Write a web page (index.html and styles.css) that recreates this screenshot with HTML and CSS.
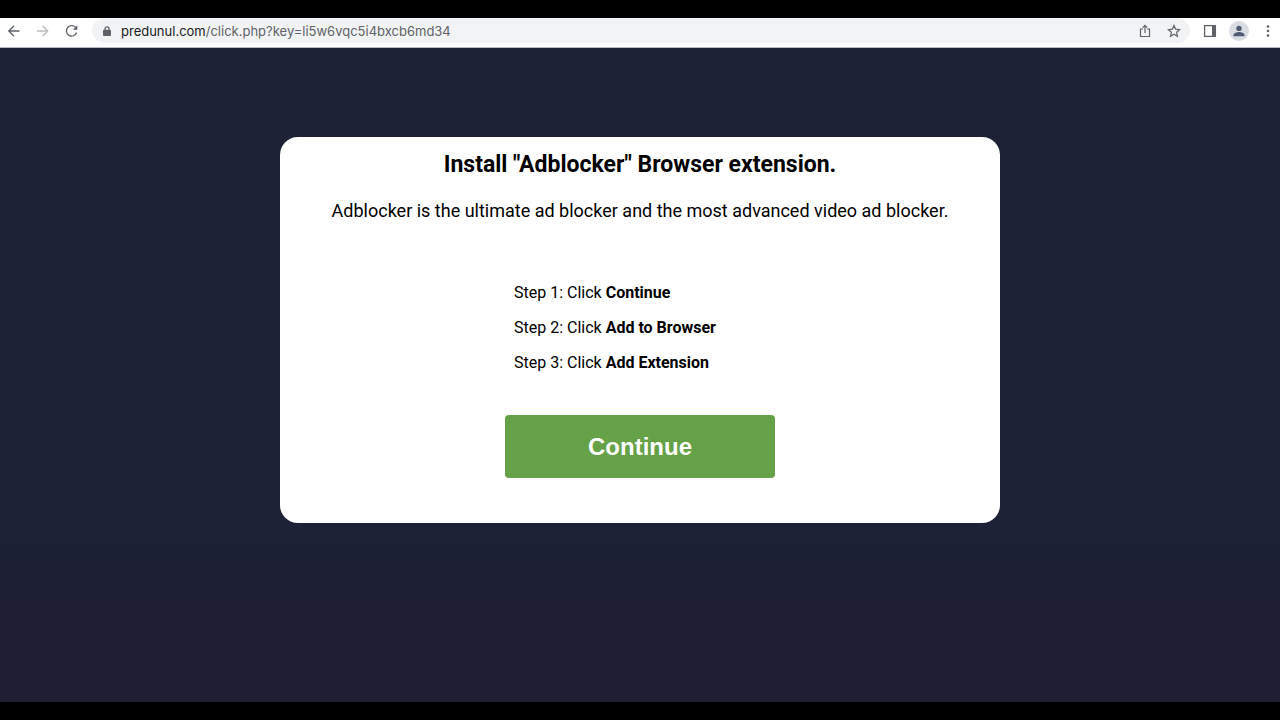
FILE: index.html
```html
<!DOCTYPE html>
<html lang="en">

<head>
  <meta charset="utf-8">
  <title>Install Adblocker</title>
  <link rel="stylesheet" href="styles.css">
</head>

<body>
  <header class="toolbar">
    <button class="nav-button" type="button" aria-label="Back">
      <svg width="14" height="14" viewBox="0 0 14 14"><path d="M12.500 7H2M7 1.800 1.800 7 7 12.200"/></svg>
    </button>
    <button class="nav-button disabled" type="button" aria-label="Forward" disabled>
      <svg width="14" height="14" viewBox="0 0 14 14"><path d="M1 7h10.500M6.500 1.800 11.700 7l-5.200 5.200"/></svg>
    </button>
    <button class="nav-button" type="button" aria-label="Reload">
      <svg width="14" height="14" viewBox="0 0 14 14"><path d="M11 4A5.200 5.200 0 1 0 11.600 8.500"/><path class="solid" d="M12.400 1.200v4.600H7.800z"/></svg>
    </button>
    <div class="address-bar">
      <svg class="lock" width="8" height="10" viewBox="0 0 8 10"><path d="M2 4.500V2.800a2 2 0 0 1 4 0v1.700"/><rect class="solid" y="3.800" width="8" height="6.200" rx="1"/></svg>
      <label class="host" for="address">predunul.com</label>
      <input id="address" type="text" value="/click.php?key=li5w6vqc5i4bxcb6md34" spellcheck="false">
      <button class="bar-button" type="button" aria-label="Share">
        <svg width="12" height="14" viewBox="0 0 12 14"><path d="M4 5H1.500v7.500h9V5H8M6 9V1.500M3.800 3.600 6 1.400l2.200 2.200"/></svg>
      </button>
      <button class="bar-button" type="button" aria-label="Bookmark this page">
        <svg width="14" height="14" viewBox="0 0 14 14"><path d="m7 1.500 1.600 3.700 4 .4-3 2.700.9 4L7 10.200l-3.500 2.100.9-4-3-2.700 4-.4z"/></svg>
      </button>
    </div>
    <button class="side-button" type="button" aria-label="Side panel">
      <svg width="14" height="14" viewBox="0 0 14 14"><rect x="1.600" y="1.600" width="10.800" height="10.800"/><path class="solid" d="M9 1h4v12H9z"/></svg>
    </button>
    <button class="side-button profile" type="button" aria-label="Profile">
      <svg width="12" height="12" viewBox="0 0 12 12"><circle cx="6" cy="3.400" r="2.700"/><path d="M.5 11.200V10c0-2 3.500-3 5.500-3s5.500 1 5.500 3v1.200z"/></svg>
    </button>
    <button class="side-button menu" type="button" aria-label="Menu">
      <svg width="4" height="14" viewBox="0 0 4 14"><circle class="solid" cx="2" cy="2.500" r="1.300"/><circle class="solid" cx="2" cy="7" r="1.300"/><circle class="solid" cx="2" cy="11.500" r="1.300"/></svg>
    </button>
  </header>

  <main class="page">
    <section class="card">
      <h1>Install "Adblocker" Browser extension.</h1>
      <p class="intro">Adblocker is the ultimate ad blocker and the most advanced video ad blocker.</p>
      <div class="steps">
        <p>Step 1: Click <b>Continue</b></p>
        <p>Step 2: Click <b>Add to Browser</b></p>
        <p>Step 3: Click <b>Add Extension</b></p>
      </div>
      <button class="continue" type="button">Continue</button>
    </section>
  </main>
</body>

</html>
```
FILE: styles.css
```css
* {
  box-sizing: border-box;
}

/* Black bars above and below the browser window */
body {
  margin: 0;
  padding: 18px 0;
  min-height: 100vh;
  display: flex;
  flex-direction: column;
  background-color: #000;
  font-family: Roboto, sans-serif;
}

button {
  padding: 0;
  border: none;
  background: none;
  cursor: pointer;
}

/* Browser toolbar */
.toolbar {
  display: flex;
  align-items: flex-start;
  height: 30px;
  padding: 0 5px;
  background-color: #fff;
  border-bottom: 1px solid #b9bac4;
}

.toolbar button {
  height: 25px;
  display: flex;
  align-items: center;
  justify-content: center;
  flex-shrink: 0;
}

.toolbar svg {
  fill: none;
  stroke: #5f6368;
  stroke-width: 1.3;
}

.toolbar .solid {
  fill: #5f6368;
  stroke: none;
}

.nav-button {
  width: 17px;
  margin-right: 12px;
}

.toolbar .disabled svg {
  stroke: #bbbdc0;
}

.address-bar {
  flex: 1;
  display: flex;
  align-items: center;
  height: 25px;
  margin-right: 13px;
  padding: 0 9px 0 11px;
  background-color: #f1f3f4;
  border-radius: 13px;
}

.lock {
  margin-right: 10px;
}

.toolbar .bar-button svg {
  stroke-width: 1.2;
}

.host,
#address {
  font-family: Inter, sans-serif;
  font-size: 13px;
  line-height: 16px;
}

.host {
  color: #202124;
}

#address {
  flex: 1;
  min-width: 0;
  padding: 0;
  border: none;
  outline: none;
  background: none;
  color: #5f6368;
}

.bar-button {
  width: 14px;
  margin-left: 15px;
}

.side-button {
  width: 14px;
  margin-right: 12px;
}

.toolbar .profile {
  width: 20px;
  height: 20px;
  margin-top: 3px;
  border-radius: 50%;
  background-color: #dadce3;
}

.toolbar .profile svg {
  fill: #4f5a73;
  stroke: none;
}

.toolbar .menu {
  width: 14px;
  margin-right: 0;
}

/* Landing page */
.page {
  flex: 1;
  padding: 89px 20px;
  background: linear-gradient(#1c2135 75%, #1e1f32 85%);
}

.card {
  display: flex;
  flex-direction: column;
  align-items: center;
  max-width: 720px;
  margin: 0 auto;
  padding: 12px 20px 45px;
  border-radius: 18px;
  background-color: #fff;
  color: #000;
}

h1 {
  margin: 0 0 18px;
  font-size: 23px;
  line-height: 32px;
}

.intro {
  margin: 0 0 52px;
  font-size: 18px;
  line-height: 24px;
}

.steps {
  width: 252px;
  margin-bottom: 35px;
}

.steps p {
  margin: 0;
  font-size: 16px;
  line-height: 35px;
}

.continue {
  width: 270px;
  height: 63px;
  border-radius: 4px;
  background-color: #65a147;
  color: #fff;
  font-family: "Liberation Sans", sans-serif;
  font-size: 24px;
  font-weight: bold;
}
```
